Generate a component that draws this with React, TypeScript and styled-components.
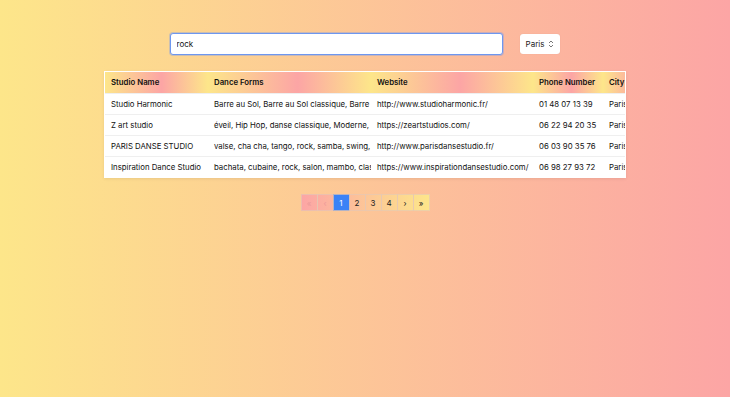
import styled, { createGlobalStyle } from "styled-components";

const GlobalStyle = createGlobalStyle`
  html, body {
    margin: 0;
    padding: 0;
  }
  body {
    font-family: Inter, "Noto Sans", Arial, sans-serif;
    color: #111;
  }
`;

/**
 * Page with the warm gradient
 */
const Page = styled.div`
  min-height: 100vh;
  background: linear-gradient(to right, #fde68a, #fca5a5);
  display: flex;
  flex-direction: column;
  align-items: center;
  padding-top: 33px;
  box-sizing: border-box;
`;

const SearchBar = styled.div`
  display: flex;
  align-items: center;
  gap: 17px;
`;

const SearchInput = styled.input`
  width: 333px;
  height: 22px;
  box-sizing: border-box;
  border: 1px solid #6d97f0;
  border-radius: 3px;
  box-shadow: 0 0 0 1px rgba(110, 150, 240, 0.35);
  padding: 0 6px;
  font-family: inherit;
  font-size: 8px;
  color: #111;
  background: #fff;
  outline: none;
`;

const CitySelect = styled.button`
  display: flex;
  align-items: center;
  gap: 4px;
  height: 20px;
  padding: 0 6px;
  border: none;
  border-radius: 3px;
  background: #fff;
  font-family: inherit;
  font-size: 8px;
  color: #222;
  box-shadow: 0 0 1px rgba(0, 0, 0, 0.15);
`;

const TableWrap = styled.div`
  width: 522px;
  margin-top: 16px;
  overflow: hidden;
  background: #fff;
  border: 1px solid rgba(255, 255, 255, 0.6);
  box-sizing: border-box;
  box-shadow: 0 1px 3px rgba(0, 0, 0, 0.08);
`;

const Table = styled.table`
  border-collapse: collapse;
  table-layout: fixed;
  width: 558px;
  font-size: 7.8px;
`;

const Th = styled.th<{ $w: number }>`
  width: ${(p) => p.$w}px;
  box-sizing: border-box;
  height: 21px;
  padding: 0 6px;
  text-align: left;
  font-weight: 600;
  white-space: nowrap;
  overflow: hidden;
  background: linear-gradient(to right, #fde68a 0%, #fca5a5 55%, #fde68a 100%);
`;

const Td = styled.td`
  height: 21px;
  padding: 0 6px;
  white-space: nowrap;
  overflow: hidden;
  border-top: 1px solid #efefef;
  box-sizing: border-box;
`;

const Pagination = styled.div`
  display: flex;
  margin-top: 16px;
  padding-left: 1px;
  background: linear-gradient(to right, #fca5a5, #fde68a);
`;

const PageButton = styled.button<{ $active?: boolean }>`
  width: 17px;
  height: 17px;
  padding: 0;
  display: flex;
  align-items: center;
  justify-content: center;
  font-family: inherit;
  font-size: 8px;
  border: 1px solid rgba(230, 200, 180, 0.7);
  margin-left: -1px;
  background: ${(p) => (p.$active ? "#3b82f6" : "transparent")};
  color: ${(p) => (p.$active ? "#fff" : "#222")};
  &:disabled {
    color: #ec9a9a;
  }
`;

const studios = [
  ["Studio Harmonic", "Barre au Sol, Barre au Sol classique, Barre au Sol contemporain", "http://www.studioharmonic.fr/", "01 48 07 13 39", "Paris"],
  ["Z art studio", "éveil, Hip Hop, danse classique, Moderne, Jazz", "https://zeartstudios.com/", "06 22 94 20 35", "Paris"],
  ["PARIS DANSE STUDIO", "valse, cha cha, tango, rock, samba, swing, salsa", "http://www.parisdansestudio.fr/", "06 03 90 35 76", "Paris"],
  ["Inspiration Dance Studio", "bachata, cubaine, rock, salon, mambo, classique", "https://www.inspirationdansestudio.com/", "06 98 27 93 72", "Paris"],
];

const columns: [string, number][] = [
  ["Studio Name", 103],
  ["Dance Forms", 163],
  ["Website", 162],
  ["Phone Number", 70],
  ["City", 60],
];

function UpDown() {
  return (
    <svg width="6" height="8" viewBox="0 0 6 8" fill="none" stroke="#555" strokeWidth="0.8">
      <path d="M1 3 L3 1 L5 3" />
      <path d="M1 5 L3 7 L5 5" />
    </svg>
  );
}

function App() {
  return (
    <Page>
      <GlobalStyle />
      <SearchBar>
        <SearchInput defaultValue="rock" autoFocus />
        <CitySelect>
          Paris <UpDown />
        </CitySelect>
      </SearchBar>

      <TableWrap>
        <Table>
          <thead>
            <tr>
              {columns.map(([name, w]) => (
                <Th key={name} $w={w}>
                  {name}
                </Th>
              ))}
            </tr>
          </thead>
          <tbody>
            {studios.map((row) => (
              <tr key={row[0]}>
                {row.map((cell, i) => (
                  <Td key={i}>{cell}</Td>
                ))}
              </tr>
            ))}
          </tbody>
        </Table>
      </TableWrap>

      <Pagination>
        <PageButton disabled>«</PageButton>
        <PageButton disabled>‹</PageButton>
        <PageButton $active>1</PageButton>
        <PageButton>2</PageButton>
        <PageButton>3</PageButton>
        <PageButton>4</PageButton>
        <PageButton>›</PageButton>
        <PageButton>»</PageButton>
      </Pagination>
    </Page>
  );
}

export default App;
